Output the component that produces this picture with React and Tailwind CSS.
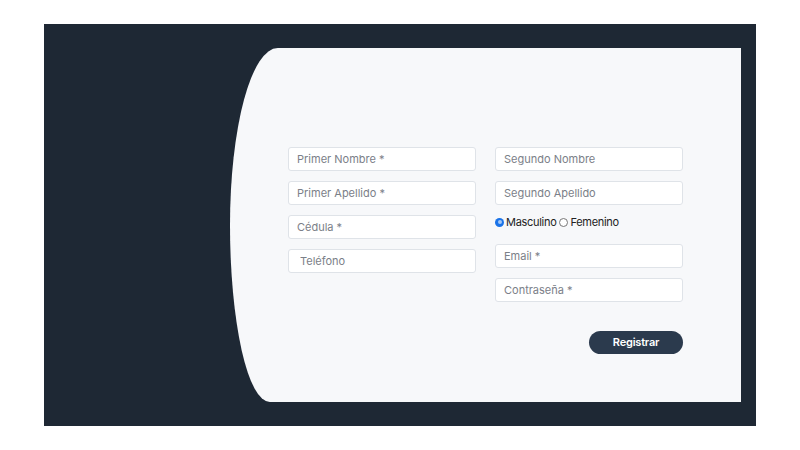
import React from 'react'

const font = { fontFamily: 'Inter, "Noto Sans", sans-serif' }

const Field = ({ placeholder, type = 'text', indent = false }) => (
    <input
        type={type}
        placeholder={placeholder}
        className={`block w-full h-[24px] bg-white border border-[#dfe3e8] rounded-[3px] ${indent ? 'pl-[11px]' : 'pl-[8px]'} text-[11px] text-[#333] placeholder:text-[#7b8088] outline-none`}
    />
)

const Radio = ({ checked, label }) => (
    <label className="flex items-center gap-[2px] text-[11px] tracking-[-0.3px] text-[#222]">
        {checked ? (
            <span className="w-[9px] h-[9px] rounded-full bg-[#1a73e8] flex items-center justify-center">
                <span className="w-[4px] h-[4px] rounded-full bg-white/60"></span>
            </span>
        ) : (
            <span className="w-[9px] h-[9px] rounded-full border border-[#777] bg-white"></span>
        )}
        <span>{label}</span>
    </label>
)

const App = () => {
    return (
        <div className="w-[800px] h-[450px] bg-white px-[44px] py-[24px]" style={font}>
            <div className="h-full bg-[#1e2834] flex justify-end pt-[24px] pb-[24px] pr-[15px]">
                <div className="w-[511px] h-full bg-[#f7f8fa] rounded-tl-[48px_178px] rounded-bl-[40px_178px] pt-[99px] px-[58px]">
                    <form className="grid grid-cols-2 gap-x-[19px]">
                        <div className="flex flex-col gap-[10px]">
                            <Field placeholder="Primer Nombre *" />
                            <Field placeholder="Primer Apellido *" />
                            <Field placeholder="Cédula *" />
                            <Field placeholder="Teléfono" indent />
                        </div>
                        <div className="flex flex-col">
                            <Field placeholder="Segundo Nombre" />
                            <div className="mt-[10px]">
                                <Field placeholder="Segundo Apellido" />
                            </div>
                            <div className="flex items-center gap-[3px] h-[16px] mt-[9px]">
                                <Radio checked label="Masculino" />
                                <Radio label="Femenino" />
                            </div>
                            <div className="mt-[14px]">
                                <Field placeholder="Email *" type="email" />
                            </div>
                            <div className="mt-[10px]">
                                <Field placeholder="Contraseña *" type="password" />
                            </div>
                            <div className="flex justify-end mt-[29px]">
                                <button type="button" className="w-[94px] h-[23px] rounded-full bg-[#2b3a4d] text-white text-[11px] tracking-[-0.2px] font-semibold">
                                    Registrar
                                </button>
                            </div>
                        </div>
                    </form>
                </div>
            </div>
        </div>
    )
}

export default App
